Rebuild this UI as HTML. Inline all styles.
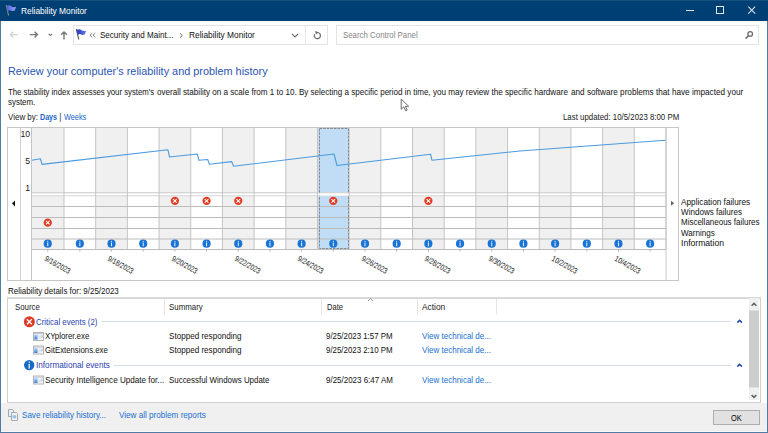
<!DOCTYPE html><html><head><meta charset="utf-8"><style>
html,body{margin:0;padding:0;width:768px;height:433px;overflow:hidden;background:#fff;font-family:"Liberation Sans", sans-serif;}
.t{position:absolute;white-space:pre;line-height:1;}
.a{position:absolute;}
svg{position:absolute;overflow:visible;}
</style></head><body>
<div class="a" style="left:0;top:0;width:768px;height:21px;background:#003f74"></div>
<div class="a" style="left:0;top:21px;width:1px;height:412px;background:#4f7ba5"></div>
<div class="a" style="left:767px;top:21px;width:1px;height:412px;background:#4f7ba5"></div>
<div class="a" style="left:0;top:432px;width:768px;height:1px;background:#4f7ba5"></div>
<svg style="left:0;top:0" width="768" height="21" viewBox="0 0 768 21">
<defs><linearGradient id="fg2" x1="0" y1="0" x2="1" y2="0"><stop offset="0" stop-color="#4a5fe0"/><stop offset="1" stop-color="#98a8f2"/></linearGradient></defs>
<g transform="translate(-70.1,-23.9)">
<line x1="76.3" y1="29" x2="78.7" y2="39.5" stroke="#8a8a78" stroke-width="1.1"/>
<path d="M76.9 29.8 Q79.6 28.4 81.6 30.3 Q83.6 31.7 86.2 30.7 L84.9 34.3 Q82.6 35.5 80.6 34.3 Q78.9 33.5 77.9 35.3 Z" fill="url(#fg2)"/>
</g>
<rect x="686" y="10" width="8" height="1" fill="#dfe6ee"/>
<rect x="716.5" y="6.5" width="7" height="7" fill="none" stroke="#dfe6ee" stroke-width="1"/>
<path d="M748.3 6.7 L755.2 13.7 M755.2 6.7 L748.3 13.7" stroke="#dfe6ee" stroke-width="1.05"/>
<rect x="0" y="0" width="768" height="1" fill="#15507e"/>
</svg>
<div class="t" style="left:20.75px;top:7.14px;font-size:8.7px;color:#fff;font-weight:normal;transform:scaleX(0.9612);transform-origin:0 0;">Reliability Monitor</div>
<svg style="left:0;top:21px" width="768" height="28" viewBox="0 21 768 28">
<path d="M10.4 34.6 H17.6 M13.2 31.8 L10.4 34.6 L13.2 37.4" fill="none" stroke="#d4d4d4" stroke-width="1.4"/>
<path d="M29.8 34.6 H37.4 M34.6 31.8 L37.4 34.6 L34.6 37.4" fill="none" stroke="#757575" stroke-width="1.4"/>
<path d="M48.6 33.8 L50.4 35.4 L52.2 33.8" fill="none" stroke="#777" stroke-width="1.1"/>
<path d="M64 39.6 V32 M61.1 34.8 L64 31.9 L66.9 34.8" fill="none" stroke="#757575" stroke-width="1.4"/>
<rect x="73.5" y="25.5" width="254" height="19" fill="#fff" stroke="#e4e4e4" stroke-width="1"/>
<line x1="305.5" y1="26" x2="305.5" y2="44" stroke="#e6e6e6"/>
<path d="M292 34 L295 37 L298 34" fill="none" stroke="#707070" stroke-width="1.1"/>
<path d="M317.5 32.5 A3.1 3.1 0 1 1 314.6 34.2" fill="none" stroke="#6a6a6a" stroke-width="1.2"/>
<path d="M315.2 31.0 L318.6 32.3 L315.8 34.4 Z" fill="#6a6a6a"/>
<defs><linearGradient id="fg" x1="0" y1="0" x2="1" y2="0"><stop offset="0" stop-color="#1f33c4"/><stop offset="1" stop-color="#6b7de6"/></linearGradient></defs>
<line x1="76.3" y1="29" x2="78.7" y2="39.5" stroke="#505050" stroke-width="1.1"/>
<path d="M76.9 29.8 Q79.6 28.4 81.6 30.3 Q83.6 31.7 86.2 30.7 L84.9 34.3 Q82.6 35.5 80.6 34.3 Q78.9 33.5 77.9 35.3 Z" fill="url(#fg)"/>
<path d="M92.3 33 L90 35.2 L92.3 37.4 M95.3 33 L93 35.2 L95.3 37.4" fill="none" stroke="#666" stroke-width="0.85"/>
<path d="M180 33.3 L182.3 35.5 L180 37.7" fill="none" stroke="#555" stroke-width="0.9"/>
<rect x="336.5" y="25.5" width="422" height="19" fill="#fff" stroke="#e4e4e4" stroke-width="1"/>
<circle cx="750.2" cy="33.9" r="2.3" fill="none" stroke="#6a6a6a" stroke-width="1.3"/>
<line x1="748.4" y1="35.8" x2="745.6" y2="38.6" stroke="#6a6a6a" stroke-width="1.5"/>
</svg>
<div class="t" style="left:100.00px;top:31.14px;font-size:8.7px;color:#111;font-weight:normal;transform:scaleX(0.9267);transform-origin:0 0;">Security and Maint...</div>
<div class="t" style="left:189.00px;top:31.14px;font-size:8.7px;color:#111;font-weight:normal;transform:scaleX(0.9612);transform-origin:0 0;">Reliability Monitor</div>
<div class="t" style="left:342.70px;top:31.34px;font-size:8.7px;color:#858585;font-weight:normal;transform:scaleX(0.9050);transform-origin:0 0;">Search Control Panel</div>
<div class="t" style="left:8.00px;top:66.12px;font-size:11.2px;color:#2a55b0;font-weight:normal;transform:scaleX(0.9723);transform-origin:0 0;">Review your computer's reliability and problem history</div>
<div class="t" style="left:8.00px;top:87.95px;font-size:8.8px;color:#111;font-weight:normal;transform:scaleX(0.8834);transform-origin:0 0;">The stability index assesses your system's</div>
<div class="t" style="left:157.30px;top:87.95px;font-size:8.8px;color:#111;font-weight:normal;transform:scaleX(0.9194);transform-origin:0 0;">overall stability on a scale from 1 to 10.</div>
<div class="t" style="left:298.90px;top:87.95px;font-size:8.8px;color:#111;font-weight:normal;transform:scaleX(0.9124);transform-origin:0 0;">By selecting a specific period in time,</div>
<div class="t" style="left:433.40px;top:87.95px;font-size:8.8px;color:#111;font-weight:normal;transform:scaleX(0.9197);transform-origin:0 0;">you may review the specific hardware</div>
<div class="t" style="left:571.00px;top:87.95px;font-size:8.8px;color:#111;font-weight:normal;transform:scaleX(0.9294);transform-origin:0 0;">and software problems that have impacted your</div>
<div class="t" style="left:8.00px;top:98.15px;font-size:8.8px;color:#111;font-weight:normal;transform:scaleX(0.9009);transform-origin:0 0;">system.</div>
<div class="t" style="left:7.80px;top:113.04px;font-size:8.7px;color:#1a1a1a;font-weight:normal;transform:scaleX(0.9175);transform-origin:0 0;">View by:</div>
<div class="t" style="left:40.10px;top:113.04px;font-size:8.7px;color:#1666c8;font-weight:bold;transform:scaleX(0.8215);transform-origin:0 0;">Days</div>
<div class="t" style="left:59.20px;top:113.96px;font-size:8.2px;color:#333;font-weight:normal;">|</div>
<div class="t" style="left:63.80px;top:113.04px;font-size:8.7px;color:#1666c8;font-weight:normal;transform:scaleX(0.8429);transform-origin:0 0;">Weeks</div>
<div class="t" style="left:563.00px;top:113.04px;font-size:8.7px;color:#1a1a1a;font-weight:normal;transform:scaleX(0.9045);transform-origin:0 0;">Last updated: 10/5/2023 8:00 PM</div>
<svg style="left:0;top:0" width="768" height="433" viewBox="0 0 768 433">
<rect x="7.5" y="127.5" width="671" height="153" fill="#fff" stroke="#c6c6c6"/>
<rect x="31.50" y="128" width="32.50" height="121.5" fill="#f0f0f0"/>
<rect x="95.68" y="128" width="31.68" height="121.5" fill="#f0f0f0"/>
<rect x="159.05" y="128" width="31.68" height="121.5" fill="#f0f0f0"/>
<rect x="222.42" y="128" width="31.68" height="121.5" fill="#f0f0f0"/>
<rect x="285.79" y="128" width="31.68" height="121.5" fill="#f0f0f0"/>
<rect x="349.16" y="128" width="31.68" height="121.5" fill="#f0f0f0"/>
<rect x="412.52" y="128" width="31.68" height="121.5" fill="#f0f0f0"/>
<rect x="475.89" y="128" width="31.68" height="121.5" fill="#f0f0f0"/>
<rect x="539.26" y="128" width="31.68" height="121.5" fill="#f0f0f0"/>
<rect x="602.63" y="128" width="31.68" height="121.5" fill="#f0f0f0"/>
<rect x="318" y="128" width="31" height="121" fill="#c0ddf5"/>
<rect x="31.5" y="192" width="634.5" height="1.5" fill="#d4d4d4"/>
<rect x="31.5" y="193.5" width="634.5" height="2" fill="#fff"/>
<rect x="31.5" y="195.3" width="634.5" height="1" fill="#d8d8d8"/>
<line x1="31.50" y1="127.5" x2="31.50" y2="249.5" stroke="#c4c4c4" stroke-width="1"/>
<line x1="64.00" y1="127.5" x2="64.00" y2="249.5" stroke="#c4c4c4" stroke-width="1"/>
<line x1="95.68" y1="127.5" x2="95.68" y2="249.5" stroke="#c4c4c4" stroke-width="1"/>
<line x1="127.37" y1="127.5" x2="127.37" y2="249.5" stroke="#c4c4c4" stroke-width="1"/>
<line x1="159.05" y1="127.5" x2="159.05" y2="249.5" stroke="#c4c4c4" stroke-width="1"/>
<line x1="190.74" y1="127.5" x2="190.74" y2="249.5" stroke="#c4c4c4" stroke-width="1"/>
<line x1="222.42" y1="127.5" x2="222.42" y2="249.5" stroke="#c4c4c4" stroke-width="1"/>
<line x1="254.10" y1="127.5" x2="254.10" y2="249.5" stroke="#c4c4c4" stroke-width="1"/>
<line x1="285.79" y1="127.5" x2="285.79" y2="249.5" stroke="#c4c4c4" stroke-width="1"/>
<line x1="317.47" y1="127.5" x2="317.47" y2="249.5" stroke="#c4c4c4" stroke-width="1"/>
<line x1="349.16" y1="127.5" x2="349.16" y2="249.5" stroke="#c4c4c4" stroke-width="1"/>
<line x1="380.84" y1="127.5" x2="380.84" y2="249.5" stroke="#c4c4c4" stroke-width="1"/>
<line x1="412.52" y1="127.5" x2="412.52" y2="249.5" stroke="#c4c4c4" stroke-width="1"/>
<line x1="444.21" y1="127.5" x2="444.21" y2="249.5" stroke="#c4c4c4" stroke-width="1"/>
<line x1="475.89" y1="127.5" x2="475.89" y2="249.5" stroke="#c4c4c4" stroke-width="1"/>
<line x1="507.58" y1="127.5" x2="507.58" y2="249.5" stroke="#c4c4c4" stroke-width="1"/>
<line x1="539.26" y1="127.5" x2="539.26" y2="249.5" stroke="#c4c4c4" stroke-width="1"/>
<line x1="570.94" y1="127.5" x2="570.94" y2="249.5" stroke="#c4c4c4" stroke-width="1"/>
<line x1="602.63" y1="127.5" x2="602.63" y2="249.5" stroke="#c4c4c4" stroke-width="1"/>
<line x1="634.31" y1="127.5" x2="634.31" y2="249.5" stroke="#c4c4c4" stroke-width="1"/>
<line x1="666.00" y1="127.5" x2="666.00" y2="249.5" stroke="#c4c4c4" stroke-width="1"/>
<line x1="31.5" y1="249.5" x2="31.5" y2="280" stroke="#c4c4c4"/>
<line x1="666" y1="127.5" x2="666" y2="280" stroke="#c8c8c8"/>
<line x1="20.5" y1="127.5" x2="20.5" y2="280" stroke="#d0d0d0"/>
<line x1="31.5" y1="206.5" x2="666" y2="206.5" stroke="#bcbcbc" stroke-width="1"/>
<line x1="31.5" y1="217.5" x2="666" y2="217.5" stroke="#bcbcbc" stroke-width="1"/>
<line x1="31.5" y1="228.5" x2="666" y2="228.5" stroke="#bcbcbc" stroke-width="1"/>
<line x1="31.5" y1="239.0" x2="666" y2="239.0" stroke="#bcbcbc" stroke-width="1"/>
<line x1="31.5" y1="249.5" x2="666" y2="249.5" stroke="#bcbcbc" stroke-width="1"/>
<line x1="47.75" y1="249.5" x2="47.75" y2="251.5" stroke="#b0b0b0"/>
<line x1="79.84" y1="249.5" x2="79.84" y2="251.5" stroke="#b0b0b0"/>
<line x1="111.53" y1="249.5" x2="111.53" y2="251.5" stroke="#b0b0b0"/>
<line x1="143.21" y1="249.5" x2="143.21" y2="251.5" stroke="#b0b0b0"/>
<line x1="174.89" y1="249.5" x2="174.89" y2="251.5" stroke="#b0b0b0"/>
<line x1="206.58" y1="249.5" x2="206.58" y2="251.5" stroke="#b0b0b0"/>
<line x1="238.26" y1="249.5" x2="238.26" y2="251.5" stroke="#b0b0b0"/>
<line x1="269.95" y1="249.5" x2="269.95" y2="251.5" stroke="#b0b0b0"/>
<line x1="301.63" y1="249.5" x2="301.63" y2="251.5" stroke="#b0b0b0"/>
<line x1="333.31" y1="249.5" x2="333.31" y2="251.5" stroke="#b0b0b0"/>
<line x1="365.00" y1="249.5" x2="365.00" y2="251.5" stroke="#b0b0b0"/>
<line x1="396.68" y1="249.5" x2="396.68" y2="251.5" stroke="#b0b0b0"/>
<line x1="428.37" y1="249.5" x2="428.37" y2="251.5" stroke="#b0b0b0"/>
<line x1="460.05" y1="249.5" x2="460.05" y2="251.5" stroke="#b0b0b0"/>
<line x1="491.73" y1="249.5" x2="491.73" y2="251.5" stroke="#b0b0b0"/>
<line x1="523.42" y1="249.5" x2="523.42" y2="251.5" stroke="#b0b0b0"/>
<line x1="555.10" y1="249.5" x2="555.10" y2="251.5" stroke="#b0b0b0"/>
<line x1="586.79" y1="249.5" x2="586.79" y2="251.5" stroke="#b0b0b0"/>
<line x1="618.47" y1="249.5" x2="618.47" y2="251.5" stroke="#b0b0b0"/>
<line x1="650.15" y1="249.5" x2="650.15" y2="251.5" stroke="#b0b0b0"/>
<rect x="319.5" y="128.5" width="29" height="120" fill="none" stroke="#8a8a8a" stroke-width="1" stroke-dasharray="2.6 1"/>
<rect x="318" y="193.5" width="31" height="2" fill="#fff"/>
<path d="M31.7,160.2 L40.4,158.75 L42,164.4 L167.9,149.8 L169.6,157 L197.2,154 L199,160.3 L207.7,159.5 L209.5,164.2 L231.6,161.6 L233.7,166.25 L334,154 L337,165.5 L430.6,154.2 L431.9,160.2 L520,151 L665.4,140.2" fill="none" stroke="#4a9be0" stroke-width="1.1" stroke-linejoin="round"/>
<path d="M12 203.4 L15 200.4 L15 206.4 Z" fill="#111"/>
<path d="M671 200.8 L674.2 203.3 L671 205.8 Z" fill="#666"/>
<circle cx="174.89" cy="200.85" r="4.15" fill="#e33d25"/><path d="M173.09 199.05 L176.69 202.65 M176.69 199.05 L173.09 202.65" stroke="#fff" stroke-width="1.05"/>
<circle cx="206.58" cy="200.85" r="4.15" fill="#e33d25"/><path d="M204.78 199.05 L208.38 202.65 M208.38 199.05 L204.78 202.65" stroke="#fff" stroke-width="1.05"/>
<circle cx="238.26" cy="200.85" r="4.15" fill="#e33d25"/><path d="M236.46 199.05 L240.06 202.65 M240.06 199.05 L236.46 202.65" stroke="#fff" stroke-width="1.05"/>
<circle cx="333.31" cy="200.85" r="4.15" fill="#e33d25"/><path d="M331.51 199.05 L335.11 202.65 M335.11 199.05 L331.51 202.65" stroke="#fff" stroke-width="1.05"/>
<circle cx="428.37" cy="200.85" r="4.15" fill="#e33d25"/><path d="M426.57 199.05 L430.17 202.65 M430.17 199.05 L426.57 202.65" stroke="#fff" stroke-width="1.05"/>
<circle cx="47.75" cy="222.65" r="4.15" fill="#e33d25"/><path d="M45.95 220.85 L49.55 224.45 M49.55 220.85 L45.95 224.45" stroke="#fff" stroke-width="1.05"/>
<circle cx="47.75" cy="243.65" r="4.1" fill="#1a74d4"/><rect x="47.25" y="242.45" width="1.0" height="3.8" fill="#e8f2fc"/><rect x="47.25" y="240.85" width="1.0" height="1.0" fill="#e8f2fc"/>
<circle cx="79.84" cy="243.65" r="4.1" fill="#1a74d4"/><rect x="79.34" y="242.45" width="1.0" height="3.8" fill="#e8f2fc"/><rect x="79.34" y="240.85" width="1.0" height="1.0" fill="#e8f2fc"/>
<circle cx="111.53" cy="243.65" r="4.1" fill="#1a74d4"/><rect x="111.03" y="242.45" width="1.0" height="3.8" fill="#e8f2fc"/><rect x="111.03" y="240.85" width="1.0" height="1.0" fill="#e8f2fc"/>
<circle cx="143.21" cy="243.65" r="4.1" fill="#1a74d4"/><rect x="142.71" y="242.45" width="1.0" height="3.8" fill="#e8f2fc"/><rect x="142.71" y="240.85" width="1.0" height="1.0" fill="#e8f2fc"/>
<circle cx="174.89" cy="243.65" r="4.1" fill="#1a74d4"/><rect x="174.39" y="242.45" width="1.0" height="3.8" fill="#e8f2fc"/><rect x="174.39" y="240.85" width="1.0" height="1.0" fill="#e8f2fc"/>
<circle cx="206.58" cy="243.65" r="4.1" fill="#1a74d4"/><rect x="206.08" y="242.45" width="1.0" height="3.8" fill="#e8f2fc"/><rect x="206.08" y="240.85" width="1.0" height="1.0" fill="#e8f2fc"/>
<circle cx="238.26" cy="243.65" r="4.1" fill="#1a74d4"/><rect x="237.76" y="242.45" width="1.0" height="3.8" fill="#e8f2fc"/><rect x="237.76" y="240.85" width="1.0" height="1.0" fill="#e8f2fc"/>
<circle cx="269.95" cy="243.65" r="4.1" fill="#1a74d4"/><rect x="269.45" y="242.45" width="1.0" height="3.8" fill="#e8f2fc"/><rect x="269.45" y="240.85" width="1.0" height="1.0" fill="#e8f2fc"/>
<circle cx="301.63" cy="243.65" r="4.1" fill="#1a74d4"/><rect x="301.13" y="242.45" width="1.0" height="3.8" fill="#e8f2fc"/><rect x="301.13" y="240.85" width="1.0" height="1.0" fill="#e8f2fc"/>
<circle cx="333.31" cy="243.65" r="4.1" fill="#1a74d4"/><rect x="332.81" y="242.45" width="1.0" height="3.8" fill="#e8f2fc"/><rect x="332.81" y="240.85" width="1.0" height="1.0" fill="#e8f2fc"/>
<circle cx="365.00" cy="243.65" r="4.1" fill="#1a74d4"/><rect x="364.50" y="242.45" width="1.0" height="3.8" fill="#e8f2fc"/><rect x="364.50" y="240.85" width="1.0" height="1.0" fill="#e8f2fc"/>
<circle cx="396.68" cy="243.65" r="4.1" fill="#1a74d4"/><rect x="396.18" y="242.45" width="1.0" height="3.8" fill="#e8f2fc"/><rect x="396.18" y="240.85" width="1.0" height="1.0" fill="#e8f2fc"/>
<circle cx="428.37" cy="243.65" r="4.1" fill="#1a74d4"/><rect x="427.87" y="242.45" width="1.0" height="3.8" fill="#e8f2fc"/><rect x="427.87" y="240.85" width="1.0" height="1.0" fill="#e8f2fc"/>
<circle cx="460.05" cy="243.65" r="4.1" fill="#1a74d4"/><rect x="459.55" y="242.45" width="1.0" height="3.8" fill="#e8f2fc"/><rect x="459.55" y="240.85" width="1.0" height="1.0" fill="#e8f2fc"/>
<circle cx="491.73" cy="243.65" r="4.1" fill="#1a74d4"/><rect x="491.23" y="242.45" width="1.0" height="3.8" fill="#e8f2fc"/><rect x="491.23" y="240.85" width="1.0" height="1.0" fill="#e8f2fc"/>
<circle cx="523.42" cy="243.65" r="4.1" fill="#1a74d4"/><rect x="522.92" y="242.45" width="1.0" height="3.8" fill="#e8f2fc"/><rect x="522.92" y="240.85" width="1.0" height="1.0" fill="#e8f2fc"/>
<circle cx="555.10" cy="243.65" r="4.1" fill="#1a74d4"/><rect x="554.60" y="242.45" width="1.0" height="3.8" fill="#e8f2fc"/><rect x="554.60" y="240.85" width="1.0" height="1.0" fill="#e8f2fc"/>
<circle cx="586.79" cy="243.65" r="4.1" fill="#1a74d4"/><rect x="586.29" y="242.45" width="1.0" height="3.8" fill="#e8f2fc"/><rect x="586.29" y="240.85" width="1.0" height="1.0" fill="#e8f2fc"/>
<circle cx="618.47" cy="243.65" r="4.1" fill="#1a74d4"/><rect x="617.97" y="242.45" width="1.0" height="3.8" fill="#e8f2fc"/><rect x="617.97" y="240.85" width="1.0" height="1.0" fill="#e8f2fc"/>
<circle cx="650.15" cy="243.65" r="4.1" fill="#1a74d4"/><rect x="649.65" y="242.45" width="1.0" height="3.8" fill="#e8f2fc"/><rect x="649.65" y="240.85" width="1.0" height="1.0" fill="#e8f2fc"/>
</svg>
<div class="t" style="left:20.47px;top:130.14px;font-size:8.7px;color:#1a1a1a;font-weight:normal;">10</div>
<div class="t" style="left:25.30px;top:157.24px;font-size:8.7px;color:#1a1a1a;font-weight:normal;">5</div>
<div class="t" style="left:25.30px;top:183.94px;font-size:8.7px;color:#1a1a1a;font-weight:normal;">1</div>
<div class="t" style="left:680.90px;top:197.84px;font-size:8.7px;color:#111;font-weight:normal;transform:scaleX(0.9487);transform-origin:0 0;">Application failures</div>
<div class="t" style="left:680.90px;top:208.14px;font-size:8.7px;color:#111;font-weight:normal;transform:scaleX(0.9304);transform-origin:0 0;">Windows failures</div>
<div class="t" style="left:680.90px;top:218.44px;font-size:8.7px;color:#111;font-weight:normal;transform:scaleX(0.9185);transform-origin:0 0;">Miscellaneous failures</div>
<div class="t" style="left:680.90px;top:228.74px;font-size:8.7px;color:#111;font-weight:normal;transform:scaleX(0.9264);transform-origin:0 0;">Warnings</div>
<div class="t" style="left:680.90px;top:239.04px;font-size:8.7px;color:#111;font-weight:normal;transform:scaleX(0.9879);transform-origin:0 0;">Information</div>
<div class="t" style="left:46.60px;top:254.6px;font-size:7.9px;color:#111;transform-origin:0 0;transform:rotate(29deg) scaleX(0.8)">9/16/2023</div>
<div class="t" style="left:110.38px;top:254.6px;font-size:7.9px;color:#111;transform-origin:0 0;transform:rotate(29deg) scaleX(0.8)">9/18/2023</div>
<div class="t" style="left:173.74px;top:254.6px;font-size:7.9px;color:#111;transform-origin:0 0;transform:rotate(29deg) scaleX(0.8)">9/20/2023</div>
<div class="t" style="left:237.11px;top:254.6px;font-size:7.9px;color:#111;transform-origin:0 0;transform:rotate(29deg) scaleX(0.8)">9/22/2023</div>
<div class="t" style="left:300.48px;top:254.6px;font-size:7.9px;color:#111;transform-origin:0 0;transform:rotate(29deg) scaleX(0.8)">9/24/2023</div>
<div class="t" style="left:363.85px;top:254.6px;font-size:7.9px;color:#111;transform-origin:0 0;transform:rotate(29deg) scaleX(0.8)">9/26/2023</div>
<div class="t" style="left:427.22px;top:254.6px;font-size:7.9px;color:#111;transform-origin:0 0;transform:rotate(29deg) scaleX(0.8)">9/28/2023</div>
<div class="t" style="left:490.58px;top:254.6px;font-size:7.9px;color:#111;transform-origin:0 0;transform:rotate(29deg) scaleX(0.8)">9/30/2023</div>
<div class="t" style="left:553.95px;top:254.6px;font-size:7.9px;color:#111;transform-origin:0 0;transform:rotate(29deg) scaleX(0.8)">10/2/2023</div>
<div class="t" style="left:617.32px;top:254.6px;font-size:7.9px;color:#111;transform-origin:0 0;transform:rotate(29deg) scaleX(0.8)">10/4/2023</div>
<div class="t" style="left:7.80px;top:286.94px;font-size:8.7px;color:#111;font-weight:normal;transform:scaleX(0.9177);transform-origin:0 0;">Reliability details for: 9/25/2023</div>
<div class="a" style="left:7px;top:297px;width:752px;height:103px;border:1px solid #d0d0d0;border-top:2px solid #d9d9d9;background:#fff"></div>
<svg style="left:0;top:0" width="768" height="433" viewBox="0 0 768 433">
<line x1="164.5" y1="299" x2="164.5" y2="314.5" stroke="#e5e5e5"/>
<line x1="321.5" y1="299" x2="321.5" y2="314.5" stroke="#e5e5e5"/>
<line x1="417.5" y1="299" x2="417.5" y2="314.5" stroke="#e5e5e5"/>
<line x1="496.5" y1="299" x2="496.5" y2="314.5" stroke="#e5e5e5"/>
<path d="M368 301 L370.5 298.5 L373 301" fill="none" stroke="#8a8a8a" stroke-width="0.9"/>
<line x1="101" y1="321.5" x2="731" y2="321.5" stroke="#d5dcef"/>
<line x1="113.5" y1="365.5" x2="731" y2="365.5" stroke="#d5dcef"/>
<path d="M737.3 322.6 L739.6 320.3 L741.9 322.6" fill="none" stroke="#2040a8" stroke-width="1.5"/>
<path d="M737.3 366.6 L739.6 364.3 L741.9 366.6" fill="none" stroke="#2040a8" stroke-width="1.5"/>
<circle cx="29.35" cy="321.75" r="5.5" fill="#de3a28"/>
<path d="M26.9 319.3 L31.8 324.2 M31.8 319.3 L26.9 324.2" stroke="#fff" stroke-width="1.3"/>
<circle cx="29.2" cy="365.1" r="5.2" fill="#1769c6"/>
<rect x="28.6" y="363.8" width="1.2" height="4.8" fill="#fff"/><rect x="28.6" y="361.5" width="1.2" height="1.2" fill="#fff"/>
<defs><linearGradient id="ab" x1="0" y1="0" x2="0" y2="1"><stop offset="0" stop-color="#a8d4f8"/><stop offset="1" stop-color="#3f7fd6"/></linearGradient></defs>
<rect x="33.5" y="332.5" width="10" height="8" fill="#f6f7f9" stroke="#b4b4b4" stroke-width="1"/>
<rect x="34" y="333.0" width="9" height="1.2" fill="#c4cad2"/>
<rect x="34.2" y="334.7" width="3.4" height="4.8" fill="url(#ab)"/>
<rect x="38.3" y="335.3" width="2.8" height="3.6" fill="#e2e5ea"/>
<rect x="41.2" y="335.3" width="1.6" height="2.4" fill="#b6cde8"/>
<rect x="33.5" y="346.0" width="10" height="8" fill="#f6f7f9" stroke="#b4b4b4" stroke-width="1"/>
<rect x="34" y="346.5" width="9" height="1.2" fill="#c4cad2"/>
<rect x="34.2" y="348.2" width="3.4" height="4.8" fill="url(#ab)"/>
<rect x="38.3" y="348.8" width="2.8" height="3.6" fill="#e2e5ea"/>
<rect x="41.2" y="348.8" width="1.6" height="2.4" fill="#b6cde8"/>
<rect x="33.5" y="376.0" width="10" height="8" fill="#f6f7f9" stroke="#b4b4b4" stroke-width="1"/>
<rect x="34" y="376.5" width="9" height="1.2" fill="#c4cad2"/>
<rect x="34.2" y="378.2" width="3.4" height="4.8" fill="url(#ab)"/>
<rect x="38.3" y="378.8" width="2.8" height="3.6" fill="#e2e5ea"/>
<rect x="41.2" y="378.8" width="1.6" height="2.4" fill="#b6cde8"/>
<rect x="749" y="298" width="10" height="102" fill="#f0f0f0"/>
<rect x="749" y="310.5" width="10" height="77" fill="#cdcdcd"/>
<path d="M751.6 305.8 L754 303.4 L756.4 305.8" fill="none" stroke="#606060" stroke-width="1.5"/>
<path d="M751.6 395 L754 397.4 L756.4 395" fill="none" stroke="#606060" stroke-width="1.5"/>
</svg>
<div class="t" style="left:15.00px;top:303.14px;font-size:8.7px;color:#1a1a1a;font-weight:normal;transform:scaleX(0.9027);transform-origin:0 0;">Source</div>
<div class="t" style="left:169.30px;top:302.94px;font-size:8.7px;color:#1a1a1a;font-weight:normal;transform:scaleX(0.9068);transform-origin:0 0;">Summary</div>
<div class="t" style="left:326.80px;top:302.94px;font-size:8.7px;color:#1a1a1a;font-weight:normal;transform:scaleX(0.8694);transform-origin:0 0;">Date</div>
<div class="t" style="left:422.00px;top:302.94px;font-size:8.7px;color:#1a1a1a;font-weight:normal;transform:scaleX(0.9624);transform-origin:0 0;">Action</div>
<div class="t" style="left:36.40px;top:317.94px;font-size:8.7px;color:#2a3fae;font-weight:normal;transform:scaleX(0.9100);transform-origin:0 0;">Critical events (2)</div>
<div class="t" style="left:36.10px;top:361.44px;font-size:8.7px;color:#2a3fae;font-weight:normal;transform:scaleX(0.9444);transform-origin:0 0;">Informational events</div>
<div class="t" style="left:45.00px;top:332.04px;font-size:8.7px;color:#111;font-weight:normal;transform:scaleX(0.9013);transform-origin:0 0;">XYplorer.exe</div>
<div class="t" style="left:169.40px;top:332.04px;font-size:8.7px;color:#111;font-weight:normal;transform:scaleX(0.9315);transform-origin:0 0;">Stopped responding</div>
<div class="t" style="left:325.90px;top:332.04px;font-size:8.7px;color:#111;font-weight:normal;transform:scaleX(0.9060);transform-origin:0 0;">9/25/2023 1:57 PM</div>
<div class="t" style="left:422.00px;top:332.04px;font-size:8.7px;color:#1a6fd0;font-weight:normal;transform:scaleX(0.9236);transform-origin:0 0;">View technical de...</div>
<div class="t" style="left:45.00px;top:346.04px;font-size:8.7px;color:#111;font-weight:normal;transform:scaleX(0.8962);transform-origin:0 0;">GitExtensions.exe</div>
<div class="t" style="left:169.40px;top:346.04px;font-size:8.7px;color:#111;font-weight:normal;transform:scaleX(0.9315);transform-origin:0 0;">Stopped responding</div>
<div class="t" style="left:325.90px;top:346.04px;font-size:8.7px;color:#111;font-weight:normal;transform:scaleX(0.9060);transform-origin:0 0;">9/25/2023 2:10 PM</div>
<div class="t" style="left:422.00px;top:346.04px;font-size:8.7px;color:#1a6fd0;font-weight:normal;transform:scaleX(0.9236);transform-origin:0 0;">View technical de...</div>
<div class="t" style="left:45.00px;top:376.34px;font-size:8.7px;color:#111;font-weight:normal;transform:scaleX(0.9345);transform-origin:0 0;">Security Intelligence Update for...</div>
<div class="t" style="left:169.40px;top:376.34px;font-size:8.7px;color:#111;font-weight:normal;transform:scaleX(0.9124);transform-origin:0 0;">Successful Windows Update</div>
<div class="t" style="left:325.90px;top:376.34px;font-size:8.7px;color:#111;font-weight:normal;transform:scaleX(0.9169);transform-origin:0 0;">9/25/2023 6:47 AM</div>
<div class="t" style="left:422.00px;top:376.34px;font-size:8.7px;color:#1a6fd0;font-weight:normal;transform:scaleX(0.9236);transform-origin:0 0;">View technical de...</div>
<div class="a" style="left:1px;top:403px;width:766px;height:28px;background:#f0f0f0"></div><div class="a" style="left:1px;top:431px;width:766px;height:1px;background:#f8f8f8"></div>
<svg style="left:0;top:0" width="768" height="433" viewBox="0 0 768 433">
<path d="M8.5 409.5 H12.5 L13.5 410.5 V416.5 H8.5 Z" fill="#e6eef9" stroke="#a0a0a0" stroke-width="0.9"/>
<path d="M11.5 412.5 H16.5 L17.5 413.5 V420.5 H11.5 Z" fill="#f2f5fa" stroke="#a0a0a0" stroke-width="0.9"/>
<rect x="12.6" y="415.2" width="3.6" height="3.2" fill="#9cc0ee"/>
</svg>
<div class="t" style="left:21.60px;top:410.84px;font-size:8.7px;color:#1a6fd0;font-weight:normal;transform:scaleX(0.9280);transform-origin:0 0;">Save reliability history...</div>
<div class="t" style="left:118.75px;top:410.84px;font-size:8.7px;color:#1a6fd0;font-weight:normal;transform:scaleX(0.9340);transform-origin:0 0;">View all problem reports</div>
<div class="a" style="left:713px;top:410px;width:45px;height:13px;background:#e1e1e1;border:1px solid #adadad"></div>
<div class="t" style="left:731.30px;top:413.74px;font-size:8.7px;color:#000;font-weight:normal;transform:scaleX(0.8544);transform-origin:0 0;">OK</div>
<svg style="left:0;top:0" width="768" height="433" viewBox="0 0 768 433">
<path d="M401.2 99 L401.2 109.3 L403.7 106.9 L405.7 110.8 L407.2 110.1 L405.3 106.3 L408.7 106.3 Z" fill="#fff" stroke="#6a6a6a" stroke-width="1" stroke-linejoin="round"/>
</svg>
</body></html>
